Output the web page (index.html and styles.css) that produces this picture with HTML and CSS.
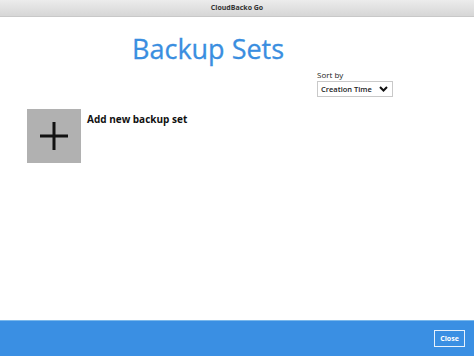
FILE: index.html
```html
<!DOCTYPE html>
<html lang="en">
<head>
    <meta charset="UTF-8">
    <title>CloudBacko Go</title>
    <link rel="stylesheet" href="styles.css">
</head>
<body>
    <div class="window">
        <div class="titlebar">CloudBacko Go</div>
        <div class="content">
            <div class="top-row">
                <h1>Backup Sets</h1>
                <div class="sort">
                    <div class="sort-label">Sort by</div>
                    <div class="select">
                        <span>Creation Time</span>
                        <svg width="9" height="6" viewBox="0 0 9 6"><path d="M1 1 L4.5 4.5 L8 1" fill="none" stroke="#111" stroke-width="2"/></svg>
                    </div>
                </div>
            </div>
            <div class="add-row">
                <div class="add-tile">
                    <svg width="28" height="28" viewBox="0 0 28 28"><path d="M14 0 V28 M0 14 H28" stroke="#111" stroke-width="3"/></svg>
                </div>
                <div class="add-label">Add new backup set</div>
            </div>
        </div>
        <div class="footer">
            <button class="close-btn">Close</button>
        </div>
    </div>
</body>
</html>
```

FILE: styles.css
```css
body {
    margin: 0;
    padding: 0;
    font-family: "Open Sans", "DejaVu Sans", sans-serif;
    background-color: #fff;
}
.window {
    width: 474px;
    height: 356px;
    display: flex;
    flex-direction: column;
}
.titlebar {
    height: 16px;
    line-height: 16px;
    text-align: center;
    font-size: 7px;
    font-weight: bold;
    color: #333;
    background: linear-gradient(#ececec, #d6d6d6);
    border-bottom: 1px solid #c8c8c8;
}
.content {
    flex: 1;
    padding: 0 0 0 27px;
}
.top-row {
    display: flex;
    align-items: flex-start;
}
h1 {
    margin: 15px 0 0 105px;
    font-size: 27px;
    font-weight: normal;
    color: #3a8ee0;
    line-height: 34px;
    width: 185px;
    -webkit-text-stroke: 0.3px #3a8ee0;
}
.sort {
    margin-top: 52px;
}
.sort-label {
    font-size: 8px;
    color: #222;
    line-height: 11px;
}
.select {
    display: flex;
    align-items: center;
    justify-content: space-between;
    width: 67px;
    height: 14px;
    padding: 0 4px 0 3px;
    margin-top: 1px;
    border: 1px solid #c9c9c9;
    font-size: 7.5px;
    font-weight: 600;
    color: #222;
    box-sizing: content-box;
}
.add-row {
    display: flex;
    margin-top: 12px;
}
.add-tile {
    width: 54px;
    height: 54px;
    background-color: #b1b1b1;
    display: flex;
    align-items: center;
    justify-content: center;
}
.add-label {
    margin: 3px 0 0 6px;
    font-size: 10px;
    font-weight: bold;
    color: #111;
}
.footer {
    height: 35px;
    background-color: #3a8fe3;
    border-top: 1px solid #7ab8ec;
    display: flex;
    align-items: center;
    justify-content: flex-end;
    padding-right: 9px;
}
.close-btn {
    width: 31px;
    height: 17px;
    padding: 0;
    background: transparent;
    border: 1.5px solid #e8f2fc;
    color: #fff;
    font-family: "Open Sans", sans-serif;
    font-size: 7px;
    font-weight: bold;
}
```
